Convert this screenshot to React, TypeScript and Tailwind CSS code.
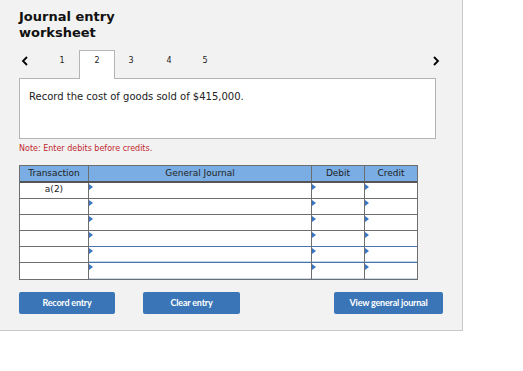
import React from 'react';

const rows = ['a(2)', '', '', '', '', ''];

const Arrow = () => (
  <span className="absolute left-0 top-[1px] w-0 h-0 border-t-[3px] border-b-[3px] border-l-[4px] border-t-transparent border-b-transparent border-l-[#3a76c4]" />
);

const Chevron = ({ dir }: { dir: 'left' | 'right' }) => (
  <svg width="8" height="10" viewBox="0 0 8 10" className="block">
    <polyline
      points={dir === 'left' ? '6,1 2,5 6,9' : '2,1 6,5 2,9'}
      fill="none"
      stroke="#000"
      strokeWidth="1.8"
    />
  </svg>
);

const App: React.FC = () => {
  return (
    <div className="w-[523px] h-[371px] bg-white" style={{ fontFamily: '"DejaVu Sans", Verdana, sans-serif' }}>
      <div className="w-[463px] h-[331px] bg-[#f2f2f2] border-r border-b border-[#c8c8c8] pl-[19px] pt-[9px]">
        <h1 className="text-[13px] font-bold leading-[16px] text-[#111] w-[110px]">Journal entry worksheet</h1>

        <div className="relative flex items-start h-[28px] mt-[9px] text-[8px] leading-[10px] text-[#222]">
          <span className="absolute left-[2px] top-[6px]"><Chevron dir="left" /></span>
          <div className="w-[35px]" />
          <div className="w-[16px] text-center pt-[6px]">1</div>
          <div className="w-[9px]" />
          <div className="w-[36px] h-[29px] bg-white border border-b-0 border-[#b4b4b4] text-center pt-[5px] relative z-10">2</div>
          <div className="w-[32px] text-center pt-[6px]">3</div>
          <div className="w-[44px] text-center pt-[6px]">4</div>
          <div className="w-[28px] text-center pt-[6px]">5</div>
          <span className="absolute left-[413px] top-[6px]"><Chevron dir="right" /></span>
        </div>

        <div className="w-[417px] h-[61px] bg-white border border-[#b4b4b4] px-[9px] pt-[10px] text-[10px] text-[#222]">
          Record the cost of goods sold of $415,000.
        </div>

        <p className="text-[8px] text-[#c0282d] mt-[5px] leading-[10px]">Note: Enter debits before credits.</p>

        <div className="mt-[11px] w-[399px] border border-[#6e6e6e] text-[9px] text-[#222]">
          <div className="grid grid-cols-[69px_223px_53px_52px] h-[17px] bg-[#79ade3] border-b-2 border-[#555] leading-[15px] text-center">
            <div className="border-r border-[#6e6e6e]">Transaction</div>
            <div className="border-r border-[#6e6e6e]">General Journal</div>
            <div className="border-r border-[#6e6e6e]">Debit</div>
            <div>Credit</div>
          </div>
          {rows.map((r, i) => (
            <div key={i} className={`grid grid-cols-[69px_223px_53px_52px] h-[16px] bg-white ${i < rows.length - 1 ? 'border-b border-[#6e6e6e]' : ''}`}>
              <div className="border-r border-[#6e6e6e] text-center leading-[12px]">{r}</div>
              {[0, 1, 2].map((c) => (
                <div
                  key={c}
                  className={`relative ${c < 2 ? 'border-r border-[#6e6e6e]' : ''} ${i >= 4 ? 'shadow-[inset_0_-1px_0_#c6d8ec]' : ''} ${i === 3 || i === 4 ? 'after:absolute after:left-0 after:right-0 after:-bottom-px after:h-px after:bg-[#4a74a8]' : ''}`}
                >
                  <Arrow />
                </div>
              ))}
            </div>
          ))}
        </div>

        <div className="flex mt-[12px] text-white font-bold text-[9px]" style={{ fontFamily: 'Lato, sans-serif' }}>
          <button className="w-[96px] h-[22px] bg-[#3a75b8] rounded-[2px] tracking-[-0.2px]">Record entry</button>
          <button className="w-[97px] h-[22px] bg-[#3a75b8] rounded-[2px] ml-[28px] tracking-[-0.2px]">Clear entry</button>
          <button className="w-[109px] h-[22px] bg-[#3a75b8] rounded-[2px] ml-[94px] tracking-[-0.2px]">View general journal</button>
        </div>
      </div>
    </div>
  );
};

export default App;
